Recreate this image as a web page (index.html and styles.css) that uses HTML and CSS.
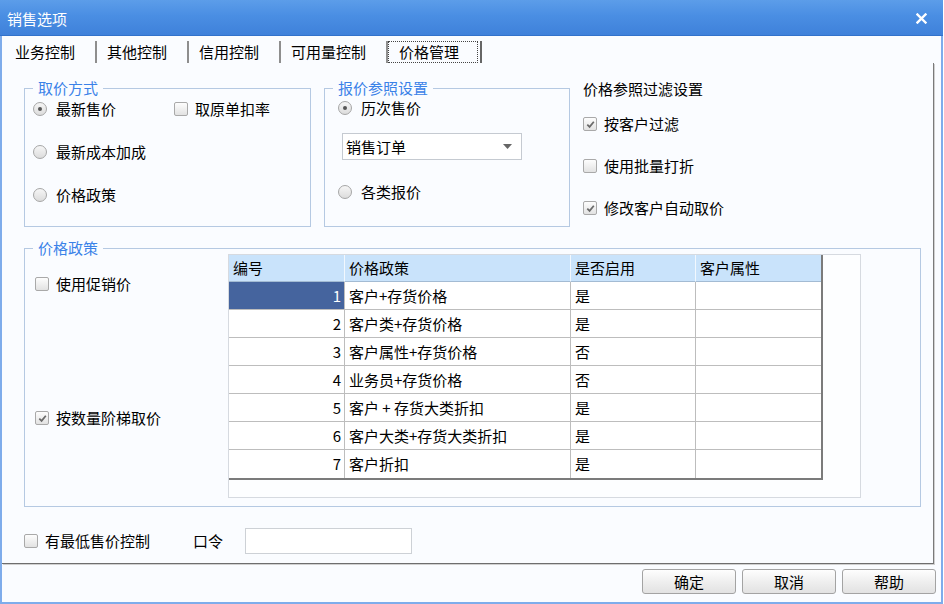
FILE: index.html
```html
<!DOCTYPE html>
<html lang="zh-CN">
<head>
    <meta charset="UTF-8">
    <title>销售选项</title>
    <link rel="stylesheet" href="styles.css">
</head>
<body>
    <div class="window">
        <div class="titlebar">
            <span class="title">销售选项</span>
            <span class="close">
                <svg width="11" height="11" viewBox="0 0 11 11"><path d="M1.5 1.5 L9.5 9.5 M9.5 1.5 L1.5 9.5" stroke="#fff" stroke-width="2.4" stroke-linecap="square"/></svg>
            </span>
        </div>
        <div class="body">
            <div class="tabs">
                <div class="tab">业务控制</div>
                <div class="tab">其他控制</div>
                <div class="tab">信用控制</div>
                <div class="tab">可用量控制</div>
                <div class="tab active"><span class="focus">价格管理</span></div>
            </div>

            <div class="panel">
                <div class="top-row">
                    <fieldset class="group group-price">
                        <legend>取价方式</legend>
                        <div class="opt-grid">
                            <label class="opt"><span class="radio on"></span>最新售价</label>
                            <label class="opt"><span class="check"></span>取原单扣率</label>
                            <label class="opt"><span class="radio"></span>最新成本加成</label>
                            <span></span>
                            <label class="opt"><span class="radio"></span>价格政策</label>
                        </div>
                    </fieldset>

                    <fieldset class="group group-ref">
                        <legend>报价参照设置</legend>
                        <div class="ref-body">
                            <label class="opt"><span class="radio on"></span>历次售价</label>
                            <div class="select">
                                <span>销售订单</span>
                                <svg width="9" height="5" viewBox="0 0 9 5"><path d="M0 0 H9 L4.5 5 Z" fill="#666"/></svg>
                            </div>
                            <label class="opt opt-last"><span class="radio"></span>各类报价</label>
                        </div>
                    </fieldset>

                    <div class="filter">
                        <div class="filter-title">价格参照过滤设置</div>
                        <label class="opt"><span class="check"><svg width="9" height="9" viewBox="0 0 9 9"><path d="M1.3 4.6 L3.6 6.9 L7.8 1.8" stroke="#6a6a6a" stroke-width="1.7" fill="none"/></svg></span>按客户过滤</label>
                        <label class="opt"><span class="check"></span>使用批量打折</label>
                        <label class="opt"><span class="check"><svg width="9" height="9" viewBox="0 0 9 9"><path d="M1.3 4.6 L3.6 6.9 L7.8 1.8" stroke="#6a6a6a" stroke-width="1.7" fill="none"/></svg></span>修改客户自动取价</label>
                    </div>
                </div>

                <fieldset class="group group-policy">
                    <legend>价格政策</legend>
                    <div class="policy-body">
                        <div class="policy-side">
                            <label class="opt"><span class="check"></span>使用促销价</label>
                            <label class="opt opt-step"><span class="check"><svg width="9" height="9" viewBox="0 0 9 9"><path d="M1.3 4.6 L3.6 6.9 L7.8 1.8" stroke="#6a6a6a" stroke-width="1.7" fill="none"/></svg></span>按数量阶梯取价</label>
                        </div>
                        <div class="grid-frame">
                            <table class="grid">
                                <colgroup>
                                    <col class="c-no">
                                    <col class="c-name">
                                    <col class="c-on">
                                    <col class="c-attr">
                                </colgroup>
                                <thead>
                                    <tr><th>编号</th><th>价格政策</th><th>是否启用</th><th>客户属性</th></tr>
                                </thead>
                                <tbody>
                                    <tr><td class="num sel">1</td><td>客户+存货价格</td><td>是</td><td></td></tr>
                                    <tr><td class="num">2</td><td>客户类+存货价格</td><td>是</td><td></td></tr>
                                    <tr><td class="num">3</td><td>客户属性+存货价格</td><td>否</td><td></td></tr>
                                    <tr><td class="num">4</td><td>业务员+存货价格</td><td>否</td><td></td></tr>
                                    <tr><td class="num">5</td><td>客户 + 存货大类折扣</td><td>是</td><td></td></tr>
                                    <tr><td class="num">6</td><td>客户大类+存货大类折扣</td><td>是</td><td></td></tr>
                                    <tr class="last"><td class="num">7</td><td>客户折扣</td><td>是</td><td></td></tr>
                                </tbody>
                            </table>
                        </div>
                    </div>
                </fieldset>

                <div class="bottom-row">
                    <label class="opt"><span class="check"></span>有最低售价控制</label>
                    <span class="pwd-label">口令</span>
                    <div class="pwd-input"></div>
                </div>
            </div>

            <div class="footer">
                <button class="btn">确定</button>
                <button class="btn">取消</button>
                <button class="btn">帮助</button>
            </div>
        </div>
    </div>
</body>
</html>
```

FILE: styles.css
```css
/* General */
body {
    margin: 0;
    font-family: "Noto Sans CJK SC", "Microsoft YaHei", sans-serif;
    font-size: 15px;
    color: #000;
    background: #fff;
}

.window {
    width: 943px;
    height: 604px;
    display: flex;
    flex-direction: column;
}

/* Title bar */
.titlebar {
    flex: none;
    height: 36px;
    box-sizing: border-box;
    display: flex;
    align-items: center;
    justify-content: space-between;
    padding: 0 16px 0 7px;
    background: linear-gradient(#5c9de9, #4a8ee3 45%, #3f81da);
    border-bottom: 1px solid #3272cb;
    color: #fff;
}

.title {
    line-height: 20px;
    margin-top: 2px;
}

.close {
    display: flex;
    margin-top: 1px;
}

.body {
    flex: 1;
    display: flex;
    flex-direction: column;
    background: #fafcff;
    border: 2px solid #7eaceb;
    border-top: none;
}

/* Tabs */
.tabs {
    flex: none;
    height: 27px;
    box-sizing: border-box;
    display: flex;
    align-items: flex-end;
    padding-left: 3px;
}

.tab {
    height: 22px;
    line-height: 22px;
    padding: 0 20px 0 10px;
    border-right: 2px solid #8e8e8e;
}

.tab.active {
    padding: 0 2px 0 0;
    border-right: 2px solid #666;
}

.focus {
    display: block;
    height: 22px;
    box-sizing: border-box;
    border: 1px dotted #444;
    padding: 0 18px 0 10px;
    line-height: 20px;
}

/* Panel */
.panel {
    flex: none;
    width: 932px;
    height: 501px;
    box-sizing: border-box;
    padding: 15px 0 0 22px;
    border-right: 1px solid #7a7a7a;
    border-bottom: 1px solid #6e6e6e;
    box-shadow: 1px 1px 0 #d0d0d0;
}

.top-row {
    display: flex;
    height: 149px;
}

/* Groups */
.group {
    margin: 0;
    min-width: 0;
    box-sizing: border-box;
    border: 1px solid #b5c9e2;
}

.group legend {
    padding: 0 5px;
    line-height: 20px;
    color: #3a82e8;
}

.group-price {
    width: 287px;
    height: 149px;
    padding: 1px 8px 0;
}

.group-ref {
    width: 246px;
    height: 149px;
    margin-left: 13px;
    padding: 0 8px;
}

.group-policy {
    width: 897px;
    height: 269px;
    margin-top: 11px;
    padding: 0 8px;
}

/* Options */
.opt {
    display: flex;
    align-items: center;
    gap: 8px;
    height: 20px;
    line-height: 20px;
    white-space: nowrap;
}

.opt-grid {
    display: grid;
    grid-template-columns: 141px auto;
    grid-auto-rows: 20px;
    row-gap: 23px;
}

.radio {
    position: relative;
    flex: none;
    width: 14px;
    height: 14px;
    margin-right: 1px;
    box-sizing: border-box;
    border: 1px solid #a6a6a6;
    border-radius: 50%;
    background: linear-gradient(#f6f6f6, #dcdcdc);
}

.radio.on::after {
    content: "";
    position: absolute;
    left: 4px;
    top: 4px;
    width: 4px;
    height: 4px;
    border-radius: 50%;
    background: #555;
}

.check {
    flex: none;
    width: 14px;
    height: 14px;
    margin-right: -1px;
    box-sizing: border-box;
    display: flex;
    align-items: center;
    justify-content: center;
    border: 1px solid #a9a9a9;
    border-radius: 2px;
    background: linear-gradient(#fdfdfd, #e2e2e2);
}

/* Quote reference */
.ref-body {
    margin-left: 5px;
}

.select {
    width: 180px;
    height: 27px;
    margin: 15px 0 0 4px;
    box-sizing: border-box;
    display: flex;
    align-items: center;
    justify-content: space-between;
    padding: 0 9px 0 3px;
    border: 1px solid #c5cad1;
    background: #fff;
}

.opt-last {
    margin-top: 22px;
}

/* Filter column */
.filter {
    margin-left: 13px;
    padding-top: 1px;
    display: flex;
    flex-direction: column;
    gap: 22px;
}

.filter-title {
    line-height: 20px;
    margin-bottom: -7px;
}

/* Price policy */
.policy-body {
    display: flex;
    margin-top: -4px;
}

.policy-side {
    flex: none;
    width: 195px;
    box-sizing: border-box;
    padding: 20px 0 0 2px;
}

.opt-step {
    margin-top: 114px;
}

.grid-frame {
    flex: none;
    width: 633px;
    height: 244px;
    box-sizing: border-box;
    border: 1px solid #d6dae0;
    background: #fdfeff;
}

.grid {
    table-layout: fixed;
    width: 594px;
    border-collapse: separate;
    border-spacing: 0;
    border-right: 2px solid #7b7b7b;
    border-bottom: 2px solid #7b7b7b;
}

.c-no { width: 116px; }
.c-name { width: 226px; }
.c-on { width: 125px; }
.c-attr { width: 125px; }

.grid th,
.grid td {
    box-sizing: border-box;
    padding: 0 0 0 4px;
    line-height: 20px;
    text-align: left;
    white-space: nowrap;
    overflow: hidden;
}

.grid th {
    height: 27px;
    font-weight: normal;
    background: #c9e3fb;
    border-right: 1px solid #f2f8fe;
    border-bottom: 1px solid #a3bbd3;
}

.grid td {
    height: 28px;
    background: #fff;
    border-right: 1px solid #bdbdbd;
    border-bottom: 1px solid #bdbdbd;
}

.grid th:last-child,
.grid td:last-child {
    border-right: none;
}

.grid tr.last td {
    border-bottom: none;
}

.grid td.num {
    text-align: right;
    padding: 0 3px 0 0;
}

.grid td.sel {
    background: #45649e;
    color: #fff;
}

/* Bottom row */
.bottom-row {
    display: flex;
    align-items: center;
    height: 26px;
    margin-top: 21px;
}

.pwd-label {
    margin-left: 43px;
    line-height: 20px;
}

.pwd-input {
    width: 167px;
    height: 26px;
    margin-left: 22px;
    box-sizing: border-box;
    border: 1px solid #cdd1d6;
    background: #fff;
}

/* Buttons */
.footer {
    display: flex;
    justify-content: flex-end;
    gap: 6px;
    padding: 5px 5px 0 0;
}

.btn {
    width: 94px;
    height: 25px;
    padding: 0;
    font-family: inherit;
    font-size: 15px;
    line-height: 20px;
    color: #000;
    border: 1px solid #a3a3a3;
    border-radius: 3px;
    background: linear-gradient(#fefefe, #efefef 50%, #e2e2e2);
}
```
